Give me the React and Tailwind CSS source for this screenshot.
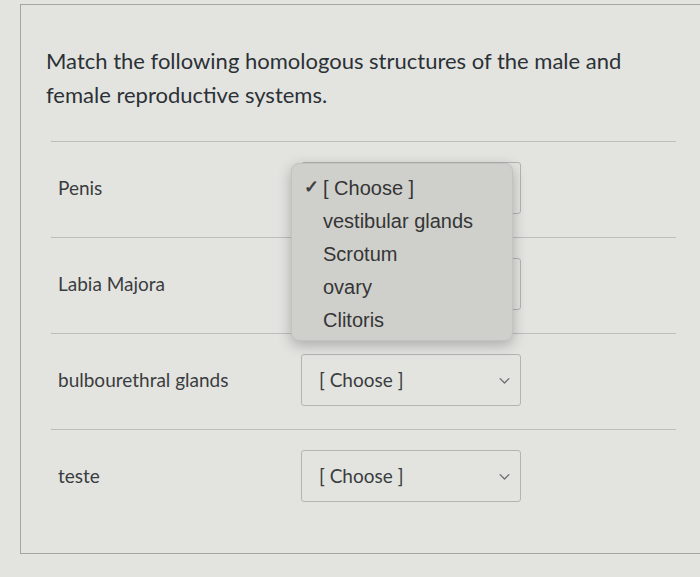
import { useState } from 'react'

const rows = ['Penis', 'Labia Majora', 'bulbourethral glands', 'teste']
const options = ['[ Choose ]', 'vestibular glands', 'Scrotum', 'ovary', 'Clitoris']

function Chevron() {
  return (
    <svg className="w-[15px] h-[15px]" viewBox="0 0 24 24" fill="none" stroke="#6f7072" strokeWidth={2.2}>
      <path strokeLinecap="round" strokeLinejoin="round" d="M5 9l7 7 7-7" />
    </svg>
  )
}

function ChoiceMenu() {
  return (
    <div className="absolute left-[-10px] top-[1px] w-[222px] h-[178px] rounded-lg bg-[#cfd0cc] shadow-[0_4px_14px_rgba(0,0,0,0.25)] border border-[#c2c3bf] pt-[7px] z-10">
      {options.map((opt, i) => (
        <div
          key={opt}
          className="flex items-center h-[33px] text-[20px] text-[#353535]"
          style={{ fontFamily: '"Liberation Sans", Arial, sans-serif' }}
        >
          <span className="w-[31px] pl-[12px] text-[18px] font-bold text-[#404040]">{i === 0 ? '✓' : ''}</span>
          <span>{opt}</span>
        </div>
      ))}
    </div>
  )
}

export default function App() {
  const [open] = useState(0)

  return (
    <div
      className="w-[700px] h-[577px] overflow-hidden bg-[#e3e4e0] pt-[4px] pl-[20px]"
      style={{ fontFamily: 'Lato, "Open Sans", sans-serif' }}
    >
      <div className="h-[550px] border-l border-t border-b border-[#a5a6a3]">
        {/* Question text */}
        <div className="pl-[25px] pt-[39px] pr-[40px] text-[22px] leading-[34px] text-[#2b3136]">
          Match the following homologous structures of the male and female reproductive systems.
        </div>

        {/* Match rows */}
        <div className="ml-[30px] w-[625px] mt-[29px]">
          {rows.map((label, i) => {
            // rows hidden behind the open menu
            const covered = i === open || i === open + 1
            return (
              <div key={label} className="h-[96px] border-t border-[#bdbebb] flex items-start pt-[20px]">
                <div className="w-[250px] pl-[7px] h-[52px] flex items-center text-[19px] text-[#3a3c3e]">
                  {label}
                </div>
                <div className="relative">
                  <div className="w-[220px] h-[52px] border border-[#b3b4b1] rounded-[3px] flex items-center justify-between pl-[17px] pr-[8px]">
                    <span className={covered ? 'invisible text-[19px]' : 'text-[19px] text-[#3a3c3e]'}>[ Choose ]</span>
                    <Chevron />
                  </div>
                  {open === i && <ChoiceMenu />}
                </div>
              </div>
            )
          })}
        </div>
      </div>
    </div>
  )
}
